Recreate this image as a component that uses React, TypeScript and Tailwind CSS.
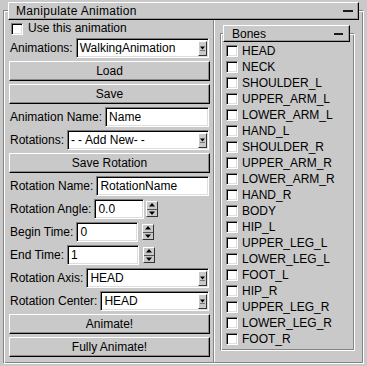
import React from "react";

const BONES = [
  "HEAD",
  "NECK",
  "SHOULDER_L",
  "UPPER_ARM_L",
  "LOWER_ARM_L",
  "HAND_L",
  "SHOULDER_R",
  "UPPER_ARM_R",
  "LOWER_ARM_R",
  "HAND_R",
  "BODY",
  "HIP_L",
  "UPPER_LEG_L",
  "LOWER_LEG_L",
  "FOOT_L",
  "HIP_R",
  "UPPER_LEG_R",
  "LOWER_LEG_R",
  "FOOT_R",
];

const sunken =
  "border border-t-[#7c7c7c] border-l-[#7c7c7c] border-b-white border-r-white shadow-[inset_1px_1px_0_#000,inset_-1px_-1px_0_#dedede] bg-white";

const raised =
  "border border-t-white border-l-white border-b-black border-r-black shadow-[inset_-1px_-1px_0_#8a8a8a] bg-[#c9c9c9]";

function CheckBox() {
  return <div className={`w-[12px] h-[12px] shrink-0 ${sunken}`} />;
}

function Button({ label }: { label: string }) {
  return (
    <div className={`h-[20px] w-full flex items-center justify-center leading-none ${raised}`}>
      {label}
    </div>
  );
}

function Arrow() {
  return (
    <div className="w-[9px] h-[15px] shrink-0 mr-[1px] flex items-center justify-center border border-t-white border-l-white border-b-[#333] border-r-[#333] bg-[#c9c9c9]">
      <svg width="5" height="6" viewBox="0 0 5 6">
        <path d="M0 1.5 L5 1.5 L2.5 4.5 Z" fill="#000" />
        <rect x="0" y="5" width="5" height="1" fill="#777" />
      </svg>
    </div>
  );
}

function Select({ value }: { value: React.ReactNode }) {
  return (
    <div className={`flex-1 h-[20px] flex items-center ${sunken}`}>
      <span className="flex-1 pl-[3px] leading-none whitespace-nowrap overflow-hidden">{value}</span>
      <Arrow />
    </div>
  );
}

function Input({ value, w }: { value: string; w?: string }) {
  return (
    <div className={`${w ?? "flex-1"} h-[20px] flex items-center ${sunken}`}>
      <span className="pl-[3px] leading-none whitespace-nowrap">{value}</span>
    </div>
  );
}

function Spinner() {
  return (
    <div className="w-[12px] h-[16px] shrink-0 flex flex-col border border-t-white border-l-white border-b-[#333] border-r-[#333] bg-[#c9c9c9]">
      <div className="flex-1 flex items-center justify-center border-b border-b-[#555]">
        <svg width="6" height="4" viewBox="0 0 6 4">
          <path d="M3 0 L6 3.5 L0 3.5 Z" fill="#000" />
        </svg>
      </div>
      <div className="flex-1 flex items-center justify-center">
        <svg width="6" height="4" viewBox="0 0 6 4">
          <path d="M0 0.5 L6 0.5 L3 4 Z" fill="#000" />
        </svg>
      </div>
    </div>
  );
}

function Row({ children }: { children: React.ReactNode }) {
  return <div className="h-[20px] flex items-center pl-[1px] pr-[1px] gap-[3px]">{children}</div>;
}

function TitleBar({ title, h, pl, minusMr, minusW, tracking }: { title: string; h: string; pl: string; minusMr: string; minusW: string; tracking?: string }) {
  return (
    <div className={`${h} flex items-center justify-between ${raised} shadow-[inset_-1px_-1px_0_#9a9a9a]`}>
      <span className={`${pl} leading-none ${tracking ?? ""}`}>{title}</span>
      <div className={`${minusW} h-[2px] ${minusMr} bg-[#1a1a1a]`} />
    </div>
  );
}

export default function App() {
  return (
    <div
      className="w-[367px] h-[366px] bg-[#c9c9c9] pt-[10px] pl-[3px] text-[12px] text-black overflow-hidden"
      style={{ fontFamily: '"Liberation Sans", Arial, sans-serif' }}
    >
      <div className="w-[361px] h-[354px] p-[1px] border border-t-[#858585] border-l-[#858585] border-b-white border-r-white shadow-[inset_1px_1px_0_#fff,inset_-1px_-1px_0_#858585]">
        <div className="-mt-[10px] ml-[3px] mr-[3px]">
          <TitleBar title="Manipulate Animation" h="h-[18px]" pl="pl-[7px]" minusMr="mr-[5px]" minusW="w-[10px]" tracking="tracking-[0.3px]" />
        </div>
        <div className="h-[342px] flex">
          {/* Left column */}
          <div className="ml-[4px] w-[201px] flex flex-col gap-[3px]">
            <div className="h-[15px] flex items-end pl-[2px] gap-[5px]">
              <CheckBox />
              <span className="leading-[14px]">Use this animation</span>
            </div>
            <Row>
              <span>Animations:</span>
              <Select value="WalkingAnimation" />
            </Row>
            <Button label="Load" />
            <Button label="Save" />
            <Row>
              <span>Animation Name:</span>
              <Input value="Name" />
            </Row>
            <Row>
              <span>Rotations:</span>
              <Select
                value={
                  <>
                    <span className="tracking-[3px]">--</span>
                    <span>Add New</span>
                    <span className="tracking-[3px]">--</span>
                  </>
                }
              />
            </Row>
            <Button label="Save Rotation" />
            <Row>
              <span>Rotation Name:</span>
              <Input value="RotationName" />
            </Row>
            <Row>
              <span>Rotation Angle:</span>
              <Input value="0.0" w="w-[50px]" />
              <div className="ml-[-1px]">
                <Spinner />
              </div>
            </Row>
            <Row>
              <span>Begin Time:</span>
              <Input value="0" w="w-[62px]" />
              <div className="ml-[1px]">
                <Spinner />
              </div>
            </Row>
            <Row>
              <span>End Time:</span>
              <Input value="1" w="w-[72px]" />
              <div className="ml-[1px]">
                <Spinner />
              </div>
            </Row>
            <Row>
              <span>Rotation Axis:</span>
              <Select value="HEAD" />
            </Row>
            <Row>
              <span>Rotation Center:</span>
              <Select value="HEAD" />
            </Row>
            <Button label="Animate!" />
            <Button label="Fully Animate!" />
          </div>

          {/* Divider */}
          <div className="ml-[3px] w-[2px] h-full border-l border-l-[#858585] border-r border-r-white" />

          {/* Bones group */}
          <div className="ml-[5px] mt-[13px] w-[135px] h-[318px] p-[1px] border border-t-[#858585] border-l-[#858585] border-b-white border-r-white shadow-[inset_1px_1px_0_#fff,inset_-1px_-1px_0_#858585]">
            <div className="-mt-[10px] ml-[1px] mr-[3px]">
              <TitleBar title="Bones" h="h-[17px]" pl="pl-[8px]" minusMr="mr-[6px]" minusW="w-[9px]" />
            </div>
            <div className="mt-[1px] pl-[4px] flex flex-col">
              {BONES.map((b) => (
                <div key={b} className="h-[16px] flex items-center gap-[4px]">
                  <CheckBox />
                  <span className="leading-none">{b}</span>
                </div>
              ))}
            </div>
          </div>
        </div>
      </div>
    </div>
  );
}
